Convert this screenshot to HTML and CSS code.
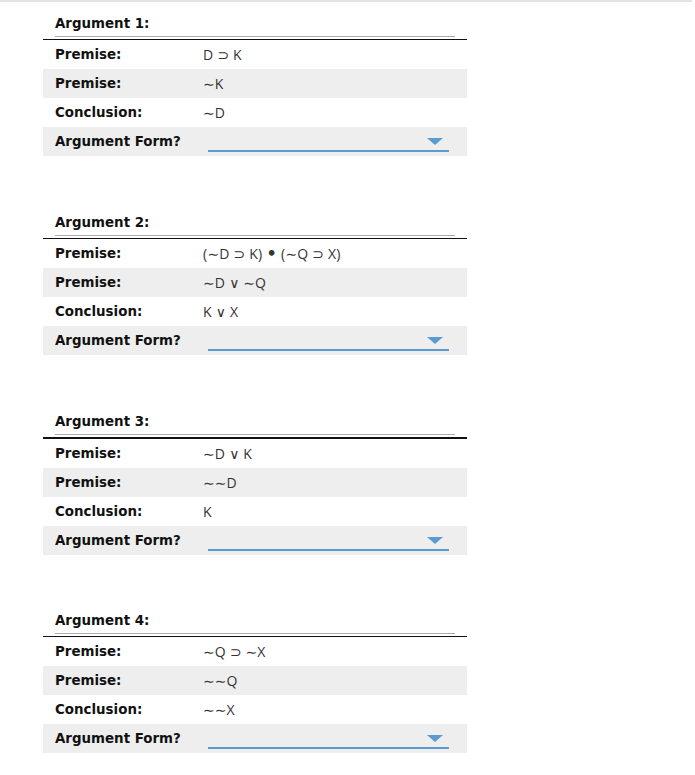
FILE: index.html
```html
<!DOCTYPE html>
<html>
<head>
<meta charset="utf-8">
<link rel="stylesheet" href="styles.css">
</head>
<body>
<div class="page">
  <div class="arg">
    <div class="title"><span>Argument 1:</span></div>
    <div class="rows">
      <div class="row"><div class="lbl">Premise:</div><div class="val">D <span class="s">⊃</span> K</div></div>
      <div class="row alt"><div class="lbl">Premise:</div><div class="val"><span class="s">∼</span>K</div></div>
      <div class="row"><div class="lbl">Conclusion:</div><div class="val"><span class="s">∼</span>D</div></div>
      <div class="row alt"><div class="lbl">Argument Form?</div><div class="select"><span class="tri"></span></div></div>
    </div>
  </div>
  <div class="arg">
    <div class="title"><span>Argument 2:</span></div>
    <div class="rows">
      <div class="row"><div class="lbl">Premise:</div><div class="val">(<span class="s">∼</span>D <span class="s">⊃</span> K) <span class="b">•</span> (<span class="s">∼</span>Q <span class="s">⊃</span> X)</div></div>
      <div class="row alt"><div class="lbl">Premise:</div><div class="val"><span class="s">∼</span>D <span class="s">∨</span> <span class="s">∼</span>Q</div></div>
      <div class="row"><div class="lbl">Conclusion:</div><div class="val">K <span class="s">∨</span> X</div></div>
      <div class="row alt"><div class="lbl">Argument Form?</div><div class="select"><span class="tri"></span></div></div>
    </div>
  </div>
  <div class="arg">
    <div class="title"><span>Argument 3:</span></div>
    <div class="rows thick">
      <div class="row"><div class="lbl">Premise:</div><div class="val"><span class="s">∼</span>D <span class="s">∨</span> K</div></div>
      <div class="row alt"><div class="lbl">Premise:</div><div class="val"><span class="s">∼∼</span>D</div></div>
      <div class="row"><div class="lbl">Conclusion:</div><div class="val">K</div></div>
      <div class="row alt"><div class="lbl">Argument Form?</div><div class="select"><span class="tri"></span></div></div>
    </div>
  </div>
  <div class="arg">
    <div class="title"><span>Argument 4:</span></div>
    <div class="rows">
      <div class="row"><div class="lbl">Premise:</div><div class="val"><span class="s">∼</span>Q <span class="s">⊃</span> <span class="s">∼</span>X</div></div>
      <div class="row alt"><div class="lbl">Premise:</div><div class="val"><span class="s">∼∼</span>Q</div></div>
      <div class="row"><div class="lbl">Conclusion:</div><div class="val"><span class="s">∼∼</span>X</div></div>
      <div class="row alt"><div class="lbl">Argument Form?</div><div class="select"><span class="tri"></span></div></div>
    </div>
  </div>
</div>
</body>
</html>
```
FILE: styles.css
```css
html, body {
  margin: 0;
  padding: 0;
  background: #fff;
}
.page {
  border-top: 2px solid #e4e4e4;
  width: 692px;
  padding: 0 0 10px 43px;
  box-sizing: border-box;
  font-family: "DejaVu Sans", Verdana, sans-serif;
}
.arg {
  width: 424px;
  margin-bottom: 45px;
}
.arg:last-child {
  margin-bottom: 0;
}
.title {
  padding: 0 12px;
  height: 35px;
  display: flex;
  align-items: flex-end;
}
.title span {
  display: block;
  width: 100%;
  border-bottom: 1px solid #aaa;
  font-weight: bold;
  font-size: 13.4px;
  line-height: 16px;
  color: #111;
  padding-bottom: 4px;
}
.rows {
  border-top: 1px solid #111;
  margin-top: 2px;
}
.rows.thick {
  border-top: 2px solid #111;
  margin-bottom: -1px;
}
.row {
  height: 29px;
  display: flex;
  align-items: center;
  padding-left: 12px;
}
.row.alt {
  background: #eeeeee;
}
.lbl {
  width: 148px;
  font-weight: bold;
  font-size: 13.4px;
  color: #111;
}
.val {
  font-family: "Open Sans", "DejaVu Sans", sans-serif;
  font-size: 14px;
  letter-spacing: 0.3px;
  color: #333;
  white-space: pre;
}
.val .s {
  font-family: "DejaVu Sans", sans-serif;
  font-size: 14px;
  letter-spacing: 0;
}
.val .b {
  font-family: "DejaVu Sans", sans-serif;
  font-size: 16px;
  font-weight: bold;
}
.select {
  margin-left: 5px;
  width: 241px;
  height: 18px;
  border-bottom: 2px solid #5b9bd2;
  position: relative;
  margin-top: 0;
}
.tri {
  position: absolute;
  right: 6px;
  top: 6px;
  width: 0;
  height: 0;
  border-left: 8px solid transparent;
  border-right: 8px solid transparent;
  border-top: 7px solid #5b9bd2;
}
```
